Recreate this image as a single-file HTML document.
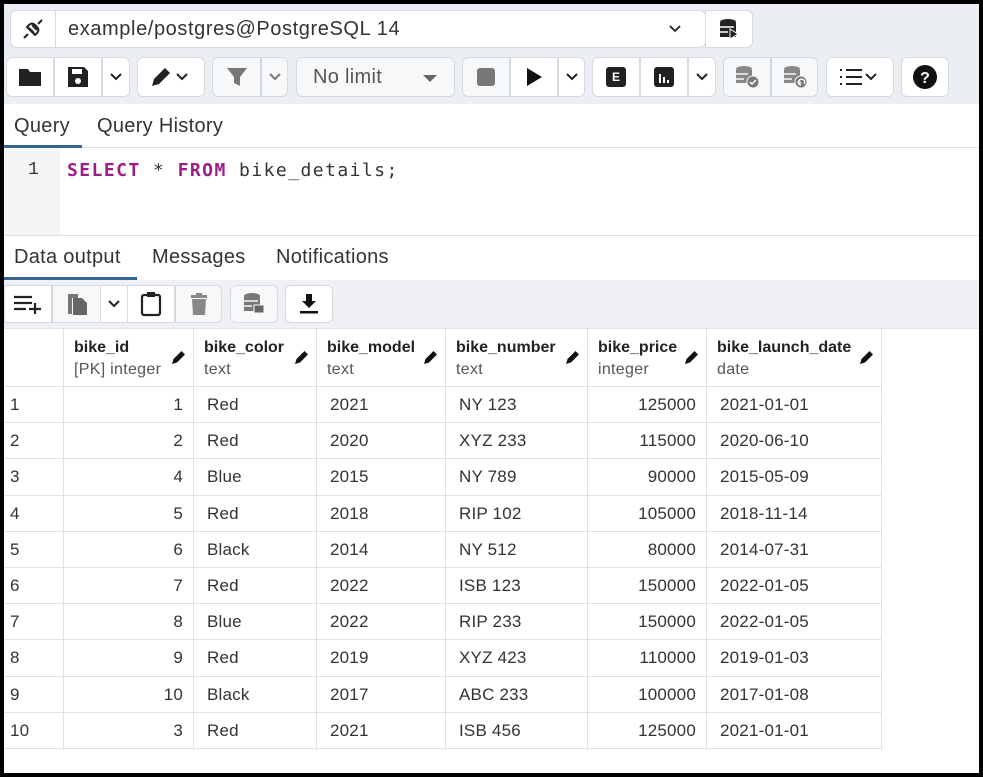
<!DOCTYPE html>
<html><head><meta charset="utf-8">
<style>
*{box-sizing:border-box;margin:0;padding:0}
body{width:983px;height:777px;background:#000;position:relative;overflow:hidden;font-family:"Liberation Sans",Arial,sans-serif;color:#222}
#app{position:absolute;left:4px;top:4px;width:975px;height:769px;background:#fff;overflow:hidden}
.a{position:absolute}
.bar{background:#ebeef3}
.btn{position:absolute;background:#fff;border:1px solid #d5d9e0;display:flex;align-items:center;justify-content:center}
.dis{background:#f7f8fa}
.tab{position:absolute;font-size:20px;letter-spacing:0.3px;color:#333}
.cell{position:absolute;font-size:17px;letter-spacing:0.2px;color:#333;border-right:1px solid #dee1e6;border-bottom:1px solid #dee1e6;height:36.3px;line-height:36px;padding:0 10px}
.h{position:absolute;border-right:1px solid #dee1e6;border-bottom:1px solid #dee1e6;height:58px;padding:8px 10px 0 10px;font-size:16px;line-height:22px}
.h b{font-weight:bold;color:#222;display:block}
.h span{color:#555;font-size:16px;letter-spacing:0.3px}
.pen{position:absolute;right:6px;top:20px}
</style></head><body>
<div id="app">
<div class="a bar" style="left:0;top:0;width:975px;height:100px"></div>
<div class="btn" style="left:6px;top:6px;width:46px;height:38px;border-radius:6px 0 0 6px">
<svg width="24" height="24" viewBox="0 0 24 24" fill="none" stroke="#222" stroke-width="2"><path d="M3 21l4-4M21 3l-4 4M8 11l5 5M11 8l5 5M6 10l8 8 2-2c2-2 2-4 0-6l-2-2c-2-2-4-2-6 0z"/></svg></div>
<div class="btn" style="left:51px;top:6px;width:651px;height:38px;border-radius:0 6px 6px 0;justify-content:flex-start;padding-left:12px;font-size:20px;letter-spacing:0.6px;color:#333">example/postgres@PostgreSQL 14
<svg class="a" style="left:612px;top:13px" width="14" height="10" viewBox="0 0 14 10"><path d="M2 2l5 5 5-5" stroke="#333" stroke-width="2" fill="none"/></svg></div>
<div class="btn" style="left:701px;top:6px;width:48px;height:38px;border-radius:0 6px 6px 0">
<svg width="22" height="24" viewBox="0 0 22 24"><ellipse cx="10" cy="5" rx="8" ry="3" fill="#222"/><rect x="2" y="6" width="16" height="14" fill="#222"/><path d="M2 10h14M2 15h8" stroke="#fff" stroke-width="1.5"/><path d="M12 12l8 5-8 5z" fill="#222" stroke="#fff" stroke-width="1"/></svg></div>

<div class="btn" style="left:2px;top:53px;width:48px;height:40px;border-radius:6px 0 0 6px"><svg width="24" height="20"><path d="M1 2h9l2 3h11v14H1z" fill="#222"/></svg></div>
<div class="btn" style="left:50px;top:53px;width:48px;height:40px"><svg width="22" height="22"><path d="M1 1h16l4 4v16H1z" fill="#222"/><rect x="5" y="3" width="10" height="5" fill="#fff"/><circle cx="11" cy="15" r="3" fill="#fff"/></svg></div>
<div class="btn" style="left:98px;top:53px;width:28px;height:40px;border-radius:0 6px 6px 0"><svg width="14" height="10"><path d="M2 2l5 5 5-5" stroke="#222" stroke-width="2" fill="none"/></svg></div>
<div class="btn" style="left:133px;top:53px;width:68px;height:40px;border-radius:6px"><svg width="44" height="24"><path d="M3 21l2-7 11-11 5 5-11 11z" fill="#222"/><path d="M28 9l5 5 5-5" stroke="#222" stroke-width="2" fill="none"/></svg></div>
<div class="btn dis" style="left:208px;top:53px;width:49px;height:40px;border-radius:6px 0 0 6px"><svg width="22" height="22"><path d="M1 2h20l-7 9v9l-6-3v-6z" fill="#777"/></svg></div>
<div class="btn dis" style="left:257px;top:53px;width:27px;height:40px;border-radius:0 6px 6px 0"><svg width="14" height="10"><path d="M2 2l5 5 5-5" stroke="#777" stroke-width="2" fill="none"/></svg></div>
<div class="btn dis" style="left:292px;top:53px;width:159px;height:40px;border-radius:6px;justify-content:flex-start;padding-left:16px;font-size:20px;letter-spacing:0.3px;color:#555">No limit<svg class="a" style="left:126px;top:17px" width="14" height="8"><path d="M0 0h14l-7 7z" fill="#666"/></svg></div>
<div class="btn dis" style="left:458px;top:53px;width:48px;height:40px;border-radius:6px 0 0 6px"><div style="width:18px;height:18px;background:#777;border-radius:3px"></div></div>
<div class="btn" style="left:506px;top:53px;width:48px;height:40px"><svg width="18" height="20"><path d="M2 1l15 9-15 9z" fill="#111"/></svg></div>
<div class="btn" style="left:554px;top:53px;width:27px;height:40px;border-radius:0 6px 6px 0"><svg width="14" height="10"><path d="M2 2l5 5 5-5" stroke="#222" stroke-width="2" fill="none"/></svg></div>
<div class="btn" style="left:588px;top:53px;width:48px;height:40px;border-radius:6px 0 0 6px"><div style="width:20px;height:20px;background:#222;border-radius:3px;color:#fff;font-size:12px;font-weight:bold;text-align:center;line-height:20px">E</div></div>
<div class="btn" style="left:636px;top:53px;width:48px;height:40px"><svg width="20" height="20"><rect width="20" height="20" rx="3" fill="#222"/><path d="M6 7v9M10 10v6M14 13v3" stroke="#fff" stroke-width="2"/></svg></div>
<div class="btn" style="left:684px;top:53px;width:28px;height:40px;border-radius:0 6px 6px 0"><svg width="14" height="10"><path d="M2 2l5 5 5-5" stroke="#222" stroke-width="2" fill="none"/></svg></div>
<div class="btn dis" style="left:719px;top:53px;width:48px;height:40px;border-radius:6px 0 0 6px"><svg width="26" height="24"><ellipse cx="10" cy="4" rx="8" ry="3" fill="#888"/><rect x="2" y="5" width="16" height="13" fill="#888"/><path d="M2 9h12M2 14h8" stroke="#f7f8fa" stroke-width="1.5"/><circle cx="19" cy="17" r="6" fill="#777" stroke="#f7f8fa"/><path d="M16 17l2 2 4-4" stroke="#fff" stroke-width="1.5" fill="none"/></svg></div>
<div class="btn dis" style="left:767px;top:53px;width:47px;height:40px;border-radius:0 6px 6px 0"><svg width="26" height="24"><ellipse cx="10" cy="4" rx="8" ry="3" fill="#888"/><rect x="2" y="5" width="16" height="13" fill="#888"/><path d="M2 9h12M2 14h8" stroke="#f7f8fa" stroke-width="1.5"/><circle cx="19" cy="17" r="6" fill="#777" stroke="#f7f8fa"/><path d="M22 19a3 3 0 1 0-3 1M16 16l1 3 2-2" stroke="#fff" stroke-width="1.5" fill="none"/></svg></div>
<div class="btn" style="left:822px;top:53px;width:68px;height:40px;border-radius:6px"><svg width="44" height="22"><path d="M2 4h2M2 11h2M2 18h2" stroke="#222" stroke-width="2"/><path d="M8 4h16M8 11h16M8 18h16" stroke="#222" stroke-width="2"/><path d="M28 8l5 5 5-5" stroke="#222" stroke-width="2" fill="none"/></svg></div>
<div class="btn" style="left:897px;top:53px;width:48px;height:40px;border-radius:6px"><svg width="24" height="24"><circle cx="12" cy="12" r="12" fill="#111"/><text x="12" y="18" font-size="16" font-weight="bold" fill="#fff" text-anchor="middle" font-family="Liberation Sans">?</text></svg></div>

<div class="a" style="left:0;top:100px;width:975px;height:44px;border-bottom:1px solid #dee1e6"></div>
<div class="tab" style="left:10px;top:111px">Query</div>
<div class="tab" style="left:93px;top:111px">Query History</div>
<div class="a" style="left:0;top:141px;width:78px;height:3px;background:#326690"></div>
<div class="a" style="left:0;top:145px;width:56px;height:86px;background:#f4f5f7"></div>
<div class="a" style="left:24px;top:156px;font-family:'Liberation Mono',monospace;font-size:18px;color:#333">1</div>
<div class="a" style="left:63px;top:156px;font-family:'DejaVu Sans Mono','Liberation Mono',monospace;font-size:18px;letter-spacing:1.45px;color:#333;white-space:pre"><b style="color:#9b1d8a">SELECT</b> * <b style="color:#9b1d8a">FROM</b> bike_details;</div>
<div class="a" style="left:0;top:231px;width:975px;height:1px;background:#dee1e6"></div>

<div class="tab" style="left:10px;top:242px">Data output</div>
<div class="tab" style="left:148px;top:242px">Messages</div>
<div class="tab" style="left:272px;top:242px">Notifications</div>
<div class="a" style="left:0;top:273px;width:133px;height:3px;background:#326690"></div>
<div class="a bar" style="left:0;top:276px;width:975px;height:48px;background:#eef0f4"></div>
<div class="btn" style="left:0;top:281px;width:48px;height:38px;border-radius:0"><svg width="30" height="20"><path d="M1 3h18M1 9h18M1 15h12M16 15h12M22 9v12" stroke="#222" stroke-width="2.2"/></svg></div>
<div class="btn dis" style="left:48px;top:281px;width:49px;height:38px"><svg width="22" height="24"><path d="M2 2h10v4H6v16H2z" fill="#777"/><path d="M7 6h9l5 5v12H7z" fill="#666"/></svg></div>
<div class="btn" style="left:96px;top:281px;width:28px;height:38px"><svg width="14" height="10"><path d="M2 2l5 5 5-5" stroke="#222" stroke-width="2" fill="none"/></svg></div>
<div class="btn" style="left:123px;top:281px;width:48px;height:38px"><svg width="22" height="26"><rect x="2" y="4" width="18" height="20" rx="2" fill="none" stroke="#222" stroke-width="2.2"/><rect x="7" y="1" width="8" height="5" fill="#222"/></svg></div>
<div class="btn dis" style="left:171px;top:281px;width:47px;height:38px;border-radius:0 6px 6px 0"><svg width="18" height="22"><rect x="1" y="2" width="16" height="3" fill="#888"/><rect x="6" y="0" width="6" height="3" fill="#888"/><path d="M2 6h14l-1 16H3z" fill="#888"/></svg></div>
<div class="btn dis" style="left:226px;top:281px;width:48px;height:38px;border-radius:6px"><svg width="24" height="24"><ellipse cx="10" cy="4" rx="8" ry="3" fill="#777"/><rect x="2" y="5" width="16" height="14" fill="#777"/><path d="M2 9h14M2 14h8" stroke="#f7f8fa" stroke-width="1.5"/><rect x="12" y="13" width="10" height="8" fill="#666" stroke="#f7f8fa"/></svg></div>
<div class="btn" style="left:281px;top:281px;width:48px;height:38px;border-radius:6px"><svg width="20" height="22"><path d="M7 1h6v7h4l-7 7-7-7h4z" fill="#111"/><rect x="1" y="18" width="18" height="2.5" fill="#111"/></svg></div>

<div class="a" style="left:0;top:324px;width:975px;height:1px;background:#dee1e6"></div>
<div id="tbl"></div>
</div>
<script>
var cols=[[0,60],[60,130],[190,123],[313,129],[442,142],[584,119],[703,175]];
var hd=[["",""],["bike_id","[PK] integer"],["bike_color","text"],["bike_model","text"],["bike_number","text"],["bike_price","integer"],["bike_launch_date","date"]];
var rows=[[1,"Red",2021,"NY 123",125000,"2021-01-01"],[2,"Red",2020,"XYZ 233",115000,"2020-06-10"],[4,"Blue",2015,"NY 789",90000,"2015-05-09"],[5,"Red",2018,"RIP 102",105000,"2018-11-14"],[6,"Black",2014,"NY 512",80000,"2014-07-31"],[7,"Red",2022,"ISB 123",150000,"2022-01-05"],[8,"Blue",2022,"RIP 233",150000,"2022-01-05"],[9,"Red",2019,"XYZ 423",110000,"2019-01-03"],[10,"Black",2017,"ABC 233",100000,"2017-01-08"],[3,"Red",2021,"ISB 456",125000,"2021-01-01"]];
var pen='<svg class="pen" width="16" height="16" viewBox="0 0 16 16"><path d="M1 15l1.5-5 8-8 3.5 3.5-8 8z" fill="#111"/></svg>';
var h='';
for(var c=0;c<7;c++){var x=cols[c][0],w=cols[c][1];
h+='<div class="h" style="left:'+x+'px;top:325px;width:'+w+'px">'+(c?'<b>'+hd[c][0]+'</b><span>'+hd[c][1]+'</span>'+pen:'')+'</div>';}
for(var r=0;r<10;r++){var y=383+r*36.2;var vals=[r+1].concat(rows[r]);
for(var c=0;c<7;c++){var al=(c==1||c==5)?'right':'left';var pl=c==0?'6px':(c>1&&c!=5?'13px':'10px');
h+='<div class="cell" style="left:'+cols[c][0]+'px;top:'+y+'px;width:'+cols[c][1]+'px;text-align:'+al+';padding-left:'+pl+(c==0?';background:#fff':'')+'">'+vals[c]+'</div>';}}
document.getElementById('tbl').innerHTML=h;
</script>
</body></html>
